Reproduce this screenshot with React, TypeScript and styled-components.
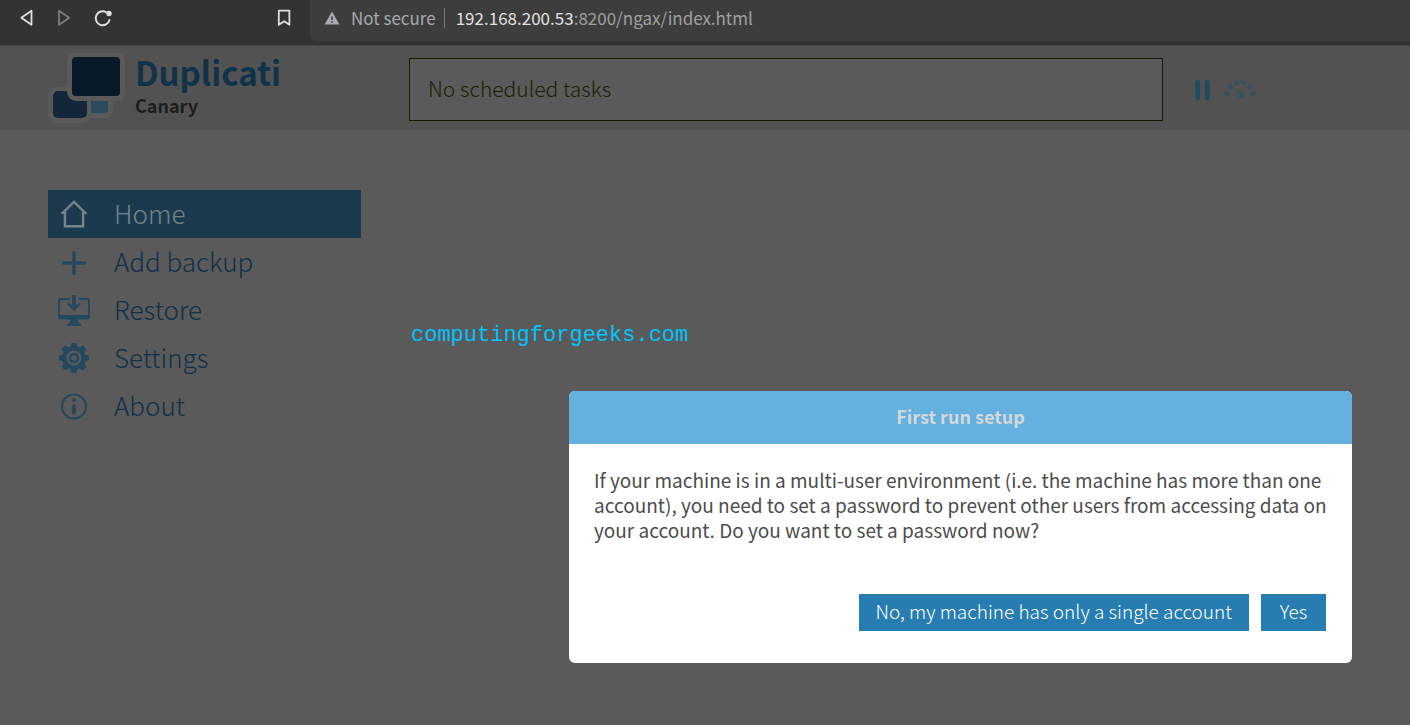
import React from 'react';
import styled, { createGlobalStyle, css } from 'styled-components';

const uiFont = '"Noto Sans CJK SC", "Noto Sans", sans-serif';

const GlobalStyle = createGlobalStyle`
  *, *::before, *::after { box-sizing: border-box; }
  body { margin: 0; background: #5a5a5a; font-family: ${uiFont}; }
  button { font-family: inherit; }
`;

const Page = styled.div`
  position: relative;
  min-height: 100vh;
  background: #5a5a5a;
`;

const BrowserBar = styled.div`
  display: flex;
  align-items: flex-start;
  height: 46px;
  background: #333333;
  border-bottom: 1px solid #444444;
`;

const NavButtons = styled.div`
  display: flex;
  flex: none;
  align-items: center;
  justify-content: space-between;
  width: 310px;
  height: 36px;
  padding: 0 16px;
`;

const NavGroup = styled.div`
  display: flex;
  gap: 18px;
`;

const IconButton = styled.button<{ $width?: number }>`
  display: flex;
  align-items: center;
  justify-content: center;
  flex: none;
  width: ${(p) => p.$width ?? 20}px;
  padding: 0;
  border: 0;
  background: none;
`;

const AddressBar = styled.div`
  display: flex;
  flex: 1;
  align-items: center;
  height: 41px;
  padding: 0 0 6px 14px;
  background: #3d3d3d;
  border-bottom-left-radius: 6px;
  font-size: 17px;
  line-height: 24px;
  color: #a5abaf;
`;

const Security = styled.span`
  display: flex;
  align-items: center;
  gap: 11px;
  padding-right: 8px;
  border-right: 1px solid #777777;
  line-height: 20px;
`;

const Url = styled.span`
  margin-left: 11px;
  color: #a0a0a0;
  b { font-weight: 400; color: #e2e2e2; }
`;

const Header = styled.header`
  display: flex;
  align-items: center;
  height: 84px;
  padding-left: 48px;
  background: #525252;
`;

const Brand = styled.div`
  display: flex;
  flex: none;
  align-items: center;
  gap: 9px;
  width: 361px;
`;

const BrandName = styled.div`
  font-size: 33px;
  font-weight: 700;
  line-height: 38px;
  color: #10324a;
`;

const Channel = styled.div`
  padding-bottom: 4px;
  font-size: 18px;
  font-weight: 700;
  line-height: 28px;
  color: #1d1d1d;
`;

const Status = styled.div`
  flex: 1;
  height: 63px;
  padding: 0 18px;
  margin-top: 3px;
  border: 1px solid #171c00;
  background: #5a5a5a;
  font-size: 21px;
  font-weight: 300;
  line-height: 58px;
  color: #172200;
`;

const StatusActions = styled.div`
  display: flex;
  flex: none;
  align-items: center;
  width: 247px;
  gap: 12px;
  padding-left: 29px;
  margin-top: 3px;
`;

const Body = styled.div`
  display: flex;
  gap: 50px;
  padding: 60px 48px 0;
`;

const Menu = styled.nav`
  flex: none;
  width: 313px;
`;

const MenuLink = styled.a<{ $active?: boolean }>`
  display: flex;
  align-items: center;
  gap: 22px;
  height: 48px;
  padding: 0 8px;
  font-size: 26px;
  font-weight: 300;
  color: #0f3149;
  text-decoration: none;
  svg { flex: none; }
  span { padding-bottom: 3px; }
  ${(p) => p.$active && css`
    background: #1c3a4d;
    color: #77838a;
  `}
`;

const Watermark = styled.p`
  margin: 0;
  padding-top: 131px;
  font-family: "Liberation Mono", monospace;
  font-size: 22px;
  line-height: 30px;
  color: #00c5ff;
`;

const Dialog = styled.section`
  position: absolute;
  top: 391px;
  right: 58px;
  width: 783px;
  max-width: 90vw;
  overflow: hidden;
  border-radius: 6px;
  background: #ffffff;
`;

const DialogTitle = styled.h2`
  margin: 0;
  padding-bottom: 2px;
  background: #64b0de;
  font-size: 18px;
  font-weight: 700;
  line-height: 51px;
  text-align: center;
  color: #d5d8da;
`;

const DialogText = styled.p`
  margin: 0;
  padding: 23px 25px 0;
  font-size: 19px;
  line-height: 25px;
  color: #4c4c4c;
`;

const DialogButtons = styled.div`
  display: flex;
  justify-content: flex-end;
  gap: 12px;
  padding: 52px 26px 32px;
`;

const ActionButton = styled.button`
  min-width: 65px;
  height: 37px;
  padding: 0 17px 4px;
  border: 0;
  background: #277db1;
  font-size: 19px;
  font-weight: 300;
  line-height: 33px;
  color: #ffffff;
`;

const iconBlue = '#24485e';

const Logo = () => (
  <svg width="78" height="72" viewBox="48 52 78 72" aria-hidden="true">
    <g fill="#5a5a5a">
      <rect x="48" y="87" width="43" height="36" rx="8" />
      <rect x="80" y="90" width="33" height="28" rx="7" />
      <rect x="67" y="53" width="58" height="48" rx="8" />
    </g>
    <rect x="53" y="91" width="34" height="27" rx="5" fill="#14263a" />
    <path d="M91 101H108V109a4 4 0 0 1-4 4H91Z" fill="#2b4a5e" />
    <path d="M67 88V92a9 9 0 0 0 9 9H91V88Z" fill="#5a5a5a" />
    <rect x="72" y="57" width="48" height="39" rx="4" fill="#08192a" />
  </svg>
);

const HomeIcon = () => (
  <svg width="36" height="36" viewBox="0 0 36 36" fill="none" stroke="#77838a" strokeWidth="2.4">
    <path d="M6 17.6 18 6l12 11.6M8.9 16v14.2h18.2V16" />
    <path d="M5 16.8h4M27 16.8h4" strokeWidth="1.6" />
  </svg>
);

const PlusIcon = () => (
  <svg width="36" height="36" viewBox="0 0 36 36" stroke={iconBlue} strokeWidth="3.4" strokeLinecap="round">
    <path d="M18 8.500v21M7.500 19h21" />
  </svg>
);

const RestoreIcon = () => (
  <svg width="36" height="36" viewBox="0 0 36 36">
    <path d="M13.500 6H5a3 3 0 0 0-3 3v15.500a3 3 0 0 0 3 3h26a3 3 0 0 0 3-3V9a3 3 0 0 0-3-3h-8.500v2H31a1 1 0 0 1 1 1v14H4V9a1 1 0 0 1 1-1h8.500Z" fill={iconBlue} />
    <path d="M16.100 3h3.800v9.500h1.600l2-2 1.500 1.700L18 19l-7-6.800 1.500-1.700 2 2h1.600Z" fill={iconBlue} />
    <path d="M14 27h8v3.500l3 1.500v2H11v-2l3-1.500Z" fill={iconBlue} />
  </svg>
);

const GearIcon = () => (
  <svg width="36" height="36" viewBox="-18 -18 36 36">
    <g fill={iconBlue}>
      {[0, 45, 90, 135].map((a) => (
        <path key={a} transform={`rotate(${a})`} d="M-2.600-15H2.600L3.800-9H-3.800ZM-2.600 15H2.600L3.800 9H-3.800Z" />
      ))}
      <circle r="11.800" />
    </g>
    <circle r="6.400" fill={iconBlue} stroke="#5a5a5a" strokeWidth="2.200" />
    <circle r="2.800" fill="#5a5a5a" />
  </svg>
);

const InfoIcon = () => (
  <svg width="36" height="36" viewBox="0 0 36 36" fill="none" stroke={iconBlue}>
    <circle cx="18" cy="18.500" r="12" strokeWidth="2.200" />
    <path d="M18 18v6.500" strokeWidth="3.800" strokeLinecap="round" />
    <circle cx="18" cy="12" r="2" fill={iconBlue} stroke="none" />
  </svg>
);

const PauseIcon = () => (
  <svg width="20" height="24" viewBox="0 0 20 24" stroke="#1f4a64" strokeWidth="4.800" strokeLinecap="round">
    <path d="M5.700 4.500v15.500M15.300 4.500v15.500" />
  </svg>
);

const ThrottleIcon = () => (
  <svg width="32" height="24" viewBox="0 0 32 24">
    <path d="M2.700 18a13.300 13.300 0 0 1 26.600 0" fill="none" stroke="#37525f" strokeWidth="4.400" strokeDasharray="4.800 2.580" />
    <path d="M11.300 10.500 18.500 14.600a3.200 3.200 0 1 1-4.300 3Z" fill="#37525f" />
  </svg>
);

const menuItems = [
  { label: 'Home', Icon: HomeIcon },
  { label: 'Add backup', Icon: PlusIcon },
  { label: 'Restore', Icon: RestoreIcon },
  { label: 'Settings', Icon: GearIcon },
  { label: 'About', Icon: InfoIcon },
];

export default function App() {
  return (
    <Page>
      <GlobalStyle />
      <BrowserBar>
        <NavButtons>
          <NavGroup>
            <IconButton aria-label="Back">
              <svg width="20" height="20" viewBox="0 0 20 20" fill="none" stroke="#e0e0e0" strokeWidth="1.800" strokeLinejoin="round">
                <path d="M15.500 2.800v14L5.300 9.800Z" />
              </svg>
            </IconButton>
            <IconButton aria-label="Forward">
              <svg width="20" height="20" viewBox="0 0 20 20" fill="none" stroke="#7c7c7c" strokeWidth="1.800" strokeLinejoin="round">
                <path d="M5 2.800v14L15.200 9.800Z" />
              </svg>
            </IconButton>
            <IconButton aria-label="Reload">
              <svg width="20" height="20" viewBox="0 0 20 20" fill="none" stroke="#e0e0e0" strokeWidth="1.900" strokeLinecap="round">
                <path d="M14.300 4.200A7 7 0 1 0 17.500 12" />
                <circle cx="17" cy="5.500" r="2.700" fill="#e0e0e0" stroke="none" />
              </svg>
            </IconButton>
          </NavGroup>
          <IconButton aria-label="Bookmark">
            <svg width="20" height="20" viewBox="0 0 20 20" fill="none" stroke="#e0e0e0" strokeWidth="1.800" strokeLinejoin="round">
              <path d="M4.800 2.700h10.600v14l-5.300-3.400-5.300 3.400Z" />
            </svg>
          </IconButton>
        </NavButtons>
        <AddressBar>
          <Security>
            <svg width="16" height="14" viewBox="0 0 16 14" aria-hidden="true">
              <path d="M8 .5 15.500 13.500H.5Z" fill="#a5abaf" />
              <path d="M8 5.500v3.500M8 10.300v1.500" stroke="#3d3d3d" strokeWidth="1.600" />
            </svg>
            Not secure
          </Security>
          <Url><b>192.168.200.53</b>:8200/ngax/index.html</Url>
        </AddressBar>
      </BrowserBar>

      <Header>
        <Brand>
          <Logo />
          <div>
            <BrandName>Duplicati</BrandName>
            <Channel>Canary</Channel>
          </div>
        </Brand>
        <Status>No scheduled tasks</Status>
        <StatusActions>
          <IconButton aria-label="Pause"><PauseIcon /></IconButton>
          <IconButton aria-label="Throttle" $width={32}><ThrottleIcon /></IconButton>
        </StatusActions>
      </Header>

      <Body>
        <Menu>
          {menuItems.map(({ label, Icon }, i) => (
            <MenuLink key={label} href="#" $active={i === 0}>
              <Icon />
              <span>{label}</span>
            </MenuLink>
          ))}
        </Menu>
        <Watermark>computingforgeeks.com</Watermark>
      </Body>

      <Dialog role="dialog" aria-labelledby="setup-title">
        <DialogTitle id="setup-title">First run setup</DialogTitle>
        <DialogText>
          If your machine is in a multi-user environment (i.e. the machine has more than one account), you need to set
          a password to prevent other users from accessing data on your account. Do you want to set a password now?
        </DialogText>
        <DialogButtons>
          <ActionButton>No, my machine has only a single account</ActionButton>
          <ActionButton>Yes</ActionButton>
        </DialogButtons>
      </Dialog>
    </Page>
  );
}
